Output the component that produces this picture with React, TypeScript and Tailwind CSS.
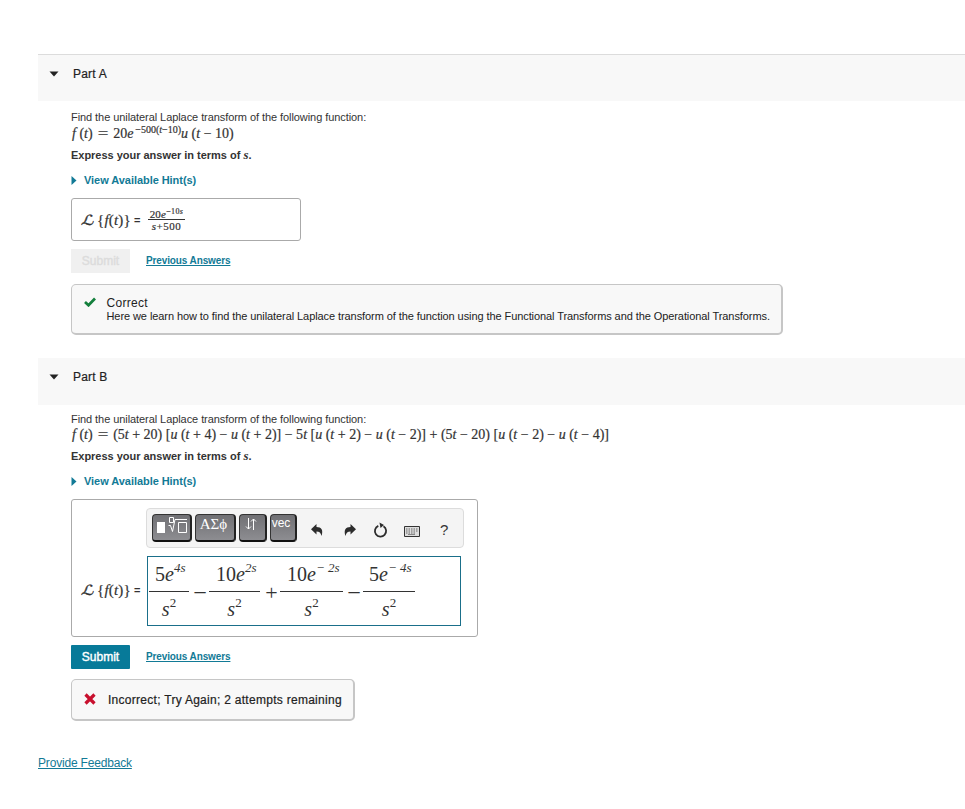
import type { ReactNode } from "react";

const serif = "font-['Liberation_Serif',serif]";
const formula = "font-['Liberation_Serif',serif] [-webkit-text-stroke:0.2px_#333]";

function I({ children }: { children: ReactNode }) {
  return <i>{children}</i>;
}

function Eq() {
  return <span className="ml-[1px] mr-[4px] inline-block w-[12px] scale-x-135 text-center">=</span>;
}

function PartHeader({ title, border }: { title: string; border?: boolean }) {
  return (
    <div className={`flex h-[47px] items-start bg-[#f8f8f8] pl-[11px] pt-[10px] ${border ? "border-t border-[#dcdcdc]" : ""}`}>
      <svg className="mt-[6px] h-[6px] w-[10px]" viewBox="0 0 10 6"><path d="M.5.5h9L5 5.5z" fill="#222" /></svg>
      <span className="ml-[14px] text-[12px] leading-[18px] tracking-[0.2px] text-[#222] [-webkit-text-stroke:0.2px_#222]">{title}</span>
    </div>
  );
}

function Express() {
  return (
    <div className="flex h-[16px] whitespace-pre text-[11px] font-bold leading-[16px] tracking-[-0.02px] text-[#333]">
      <span>Express your answer in terms of </span>
      <span className={`${serif} text-[13px] italic`}>s</span><span>.</span>
    </div>
  );
}

function Hints() {
  return (
    <div className="flex h-[16px] items-center text-[11px] font-bold leading-[16px] text-[#127a96]">
      <svg className="h-[9px] w-[6px]" viewBox="0 0 6 9"><path d="M.5 0 5.500 4.500 .5 9z" fill="#127a96" /></svg>
      <span className="ml-[7px] tracking-[-0.05px]">View Available Hint(s)</span>
    </div>
  );
}

function Laplace() {
  return (
    <div className="flex w-[60px] items-center whitespace-nowrap text-[#333]">
      <span className="w-[14px] origin-left scale-x-125 -skew-x-12 font-['DejaVu_Sans',sans-serif] text-[14px] leading-[16px] [-webkit-text-stroke:0.3px_#333]">ℒ</span>
      <span className={`${formula} ml-[1px] w-[35px] text-[15px] leading-[18px] tracking-[0.2px]`}>{"{"}<I>f</I>(<I>t</I>){"}"}</span>
      <span className="ml-[2px] text-[11px] font-bold leading-[16px]">=</span>
    </div>
  );
}

function Actions({ disabled }: { disabled?: boolean }) {
  return (
    <div className="flex h-[24px] items-center">
      <span className={`flex h-[24px] w-[59px] items-center justify-center pb-[1px] text-[12px] ${disabled ? "bg-[#f0f0f0] text-[#dcdcdc] [-webkit-text-stroke:0.4px_#dcdcdc]" : "rounded-[1px] bg-[#077a99] text-white [-webkit-text-stroke:0.4px_#fff]"}`}>Submit</span>
      <a className="ml-[16px] text-[10px] font-bold leading-[14px] tracking-[-0.12px] text-[#127a96] underline">Previous Answers</a>
    </div>
  );
}

function Term({ width, base, exp, left }: { width: string; base: string; exp: string; left: string }) {
  return (
    <div className={`${serif} ${width} flex h-[68px] flex-col text-[20px] text-[#333]`}>
      <div className={`h-[35px] border-b border-[#333] leading-[34px] whitespace-nowrap ${left}`}>
        {base}<I>e</I><sup className="relative -top-[9px] align-baseline text-[13px] italic leading-none">{exp}</sup>
      </div>
      <div className="h-[33px] text-center leading-[35px]">
        <I>s</I><sup className="relative -top-[9px] align-baseline text-[13px] leading-none">2</sup>
      </div>
    </div>
  );
}

function Op({ children, className }: { children: string; className: string }) {
  return <span className={`${serif} flex h-[70px] items-center justify-center text-[22px] text-[#333] ${className}`}>{children}</span>;
}

const key = "flex h-[28px] items-start justify-center rounded-[4px] border border-[#333] border-b-2 border-r-2 border-b-[#111] border-r-[#222] bg-gradient-to-b from-[#707074] to-[#8d8d91] text-white";

function Toolbar() {
  return (
    <div className="flex h-[40px] w-[318px] items-center rounded-[4px] border border-[#dcdcdc] bg-[#f4f4f4] pl-[5px]">
      <span className={`${key} w-[40px]`}>
        <svg className="mt-[1px] h-[22px] w-[32px] shrink-0" viewBox="0 0 32 22" fill="none" stroke="#fff">
          <path d="M1 6h8v11H1z" fill="#fff" stroke="none" />
          <path d="M13.5 1.5h4v5h-4z M12.500 9.500h2l2 6 2.500-12h12 M22.5 6.5h8v10h-8z" />
        </svg>
      </span>
      <span className={`${key} ${serif} ml-[3px] w-[41px] text-[15px] leading-[19px]`}><span className="mr-[3px]">ΑΣϕ</span></span>
      <span className={`${key} ml-[3px] w-[28px]`}>
        <svg className="mt-[2px] mr-[4px] h-[14px] w-[12px]" viewBox="0 0 12 14" fill="none" stroke="#fff"><path d="M3.5 1v11M1 9.5 3.5 12 6 9.5M8.5 13V2M6 4.5 8.5 2 11 4.5" /></svg>
      </span>
      <span className={`${key} ml-[3px] w-[27px] text-[12px] leading-[16px]`}><span className="mr-[4px]">vec</span></span>
      <svg className="ml-[14px] mt-[3px] h-[12px] w-[13px]" viewBox="0 0 13 12"><path d="M5.500 0v3C10.500 3 12.500 6 10.500 12 9.800 8.800 8.500 7.500 5.500 7.500v3L0 5.200z" fill="#2c2c2c" /></svg>
      <svg className="ml-[19px] mt-[3px] h-[12px] w-[13px]" viewBox="0 0 13 12"><path d="M7.500 0v3C2.500 3 .5 6 2.500 12 3.200 8.800 4.500 7.500 7.500 7.500v3L13 5.200z" fill="#2c2c2c" /></svg>
      <svg className="ml-[17px] mt-[3px] h-[16px] w-[15px]" viewBox="0 0 15 16" fill="none" stroke="#2c2c2c" strokeWidth="1.8"><path d="M10.500 4.200A5.600 5.600 0 1 1 5.300 3.800" /><path d="M6.500.5 11 3 7.500 6z" fill="#2c2c2c" stroke="none" /></svg>
      <svg className="ml-[16px] mt-[7px] h-[11px] w-[16px]" viewBox="0 0 16 11"><path d="M.5.500h15v10H.5z" fill="#ddd" stroke="#333" /><path d="M2 3h12M2 5h12M2 7h9" stroke="#666" strokeDasharray="1.500 1" /><path d="M4 8.500h7" stroke="#888" /></svg>
      <span className="ml-[20px] mt-[3px] text-[15px] leading-[18px] text-[#333]">?</span>
    </div>
  );
}

export default function App() {
  return (
    <div className="h-[809px] w-full overflow-hidden bg-white pl-[38px] pt-[54px] font-['Liberation_Sans',Arial,sans-serif] text-[#333]">
      <PartHeader title="Part A" border />
      <div className="pl-[33px] pt-[9px]">
        <p className="h-[14px] text-[11px] leading-[14px] tracking-[-0.07px]">Find the unilateral Laplace transform of the following function:</p>
        <p className={`${formula} mt-[1px] h-[18px] whitespace-pre pl-[1px] text-[14px] leading-[18px]`}>
          <I>f</I> (<I>t</I>) <Eq />20<I>e</I><sup className="relative -top-[5px] ml-[2px] align-baseline text-[10px] leading-none">−500(<I>t</I>−10)</sup><span><I>u</I> (<I>t</I> − 10)</span>
        </p>
        <div className="mt-[4px]"><Express /></div>
        <div className="mt-[9px]"><Hints /></div>
        <div className="mt-[10px] flex h-[43px] w-[230px] items-center rounded-[3px] border border-[#aaa] pl-[10px]">
          <Laplace />
          <div className={`${formula} ml-[6px] flex w-[37px] flex-col text-center text-[11px]`}>
            <span className="h-[12px] whitespace-nowrap border-b border-[#333] leading-[13px] tracking-[0.2px]">20<I>e</I><sup className="relative -top-[4px] align-baseline text-[8px] leading-none tracking-[0.4px]">−10<I>s</I></sup></span>
            <span className="h-[12px] leading-[12px] tracking-[0.5px]"><I>s</I>+500</span>
          </div>
        </div>
        <div className="mt-[8px]"><Actions disabled /></div>
        <div className="mt-[11px] flex h-[51px] w-[712px] rounded-[5px] border border-b-2 border-r-2 border-[#c6c6c6] bg-[#f8f8f8] pl-[12px] pt-[11px]">
          <svg className="mt-[1px] h-[10px] w-[12px]" viewBox="0 0 12 10"><path d="M1 5 4.500 8.300 11 1.500" fill="none" stroke="#15803d" strokeWidth="2.700" /></svg>
          <div className="ml-[10.5px]">
            <p className="h-[14px] text-[12px] leading-[14px] tracking-[0.3px] text-[#222]">Correct</p>
            <p className="h-[13px] whitespace-nowrap text-[11px] leading-[13px] tracking-[-0.08px] text-[#222]">Here we learn how to find the unilateral Laplace transform of the function using the Functional Transforms and the Operational Transforms.</p>
          </div>
        </div>
      </div>
      <div className="mt-[23px]"><PartHeader title="Part B" /></div>
      <div className="pl-[33px] pt-[7px]">
        <p className="h-[14px] text-[11px] leading-[14px] tracking-[-0.07px]">Find the unilateral Laplace transform of the following function:</p>
        <p className={`${formula} h-[18px] whitespace-pre pl-[1px] text-[14px] leading-[18px]`}>
          <I>f</I> (<I>t</I>) <Eq />(5<I>t</I> + 20) [<I>u</I> (<I>t</I> + 4) − <I>u</I> (<I>t</I> + 2)] − 5<I>t</I> [<I>u</I> (<I>t</I> + 2) − <I>u</I> (<I>t</I> − 2)] + (5<I>t</I> − 20) [<I>u</I> (<I>t</I> − 2) − <I>u</I> (<I>t</I> − 4)]
        </p>
        <div className="mt-[4px]"><Express /></div>
        <div className="mt-[9px]"><Hints /></div>
        <div className="mt-[10px] flex h-[138px] w-[407px] rounded-[3px] border border-[#aaa] pl-[10px]">
          <div className="mt-[81px]"><Laplace /></div>
          <div className="ml-[4px] mt-[8px]">
            <Toolbar />
            <div className="ml-[1px] mt-[8px] flex h-[70px] w-[314px] border border-[#1a6f8a] pl-[1px]">
              <Term width="w-[40px]" base="5" exp="4s" left="pl-[6px]" />
              <Op className="w-[22px] scale-x-110">−</Op>
              <Term width="-ml-[2px] w-[51px]" base="10" exp="2s" left="pl-[7px]" />
              <Op className="w-[20px] pl-[3px]">+</Op>
              <Term width="w-[63px]" base="10" exp="− 2s" left="pl-[7px]" />
              <Op className="w-[22px] scale-x-110">−</Op>
              <Term width="-ml-[2px] w-[52px]" base="5" exp="− 4s" left="pl-[6px]" />
            </div>
          </div>
        </div>
        <div className="mt-[8px]"><Actions /></div>
        <div className="mt-[10px] flex h-[42px] w-[284px] items-center rounded-[5px] border border-b-2 border-r-2 border-[#c6c6c6] bg-[#f8f8f8] pl-[12px]">
          <svg className="mb-[2px] h-[12px] w-[12px]" viewBox="0 0 12 12"><path d="m1.500 1.500 9 9m0-9-9 9" stroke="#c8102e" strokeWidth="3.200" /></svg>
          <span className="ml-[12px] whitespace-nowrap pt-[1px] text-[12px] tracking-[0.28px] text-[#222] [-webkit-text-stroke:0.2px_#222]">Incorrect; Try Again; 2 attempts remaining</span>
        </div>
      </div>
      <a className="mt-[34px] block h-[16px] text-[12px] leading-[16px] tracking-[-0.18px] text-[#127a96] underline">Provide Feedback</a>
    </div>
  );
}
